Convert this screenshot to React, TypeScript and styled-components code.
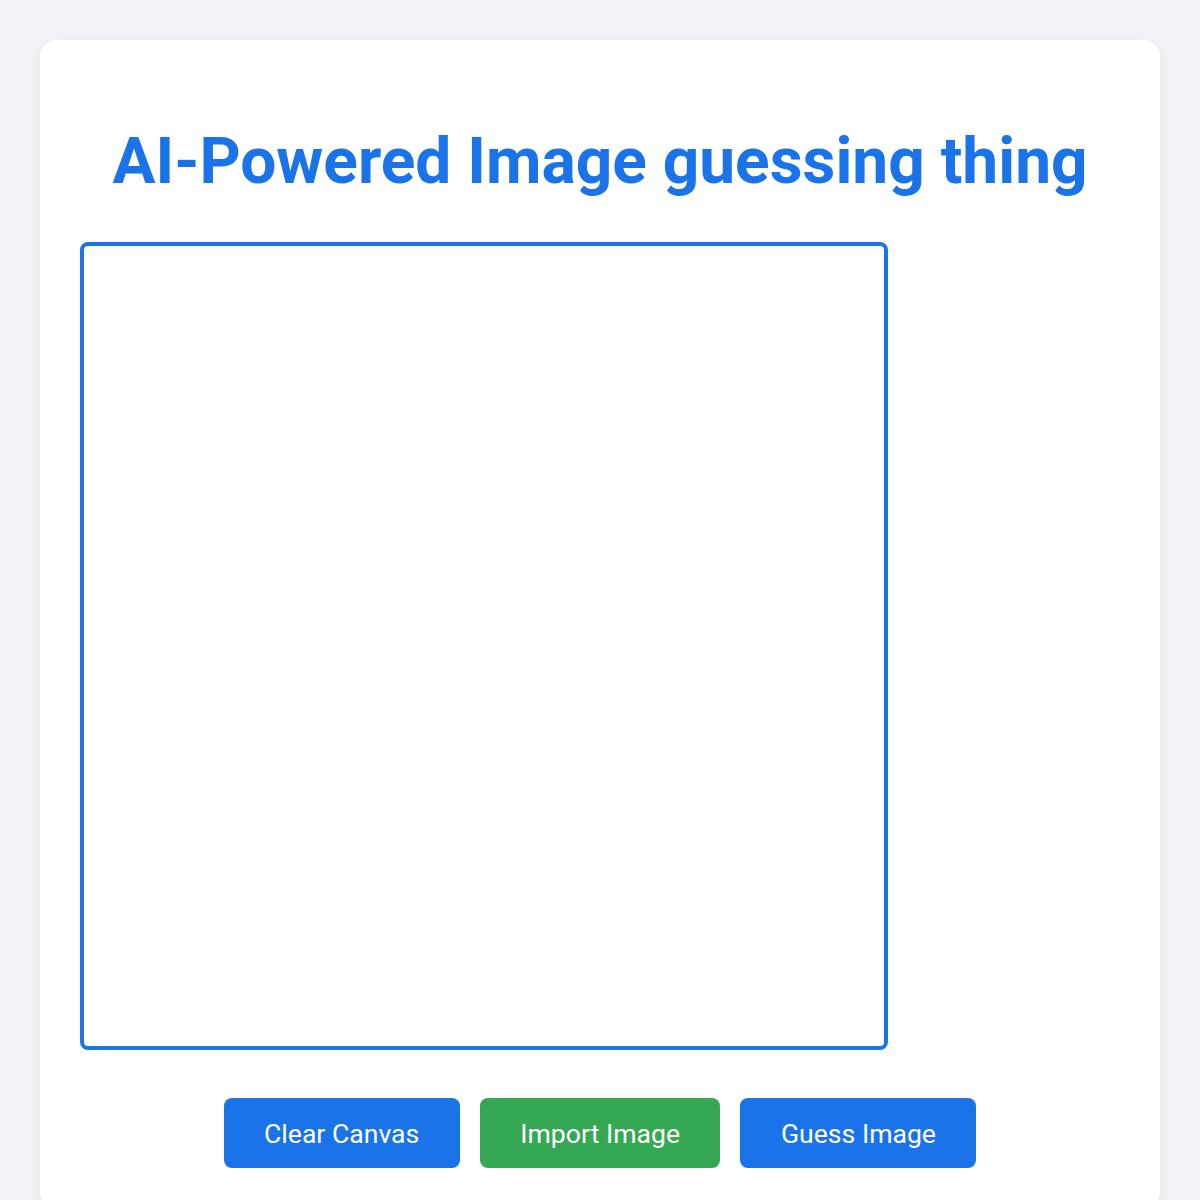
import { createGlobalStyle, styled } from "styled-components";

const GlobalStyle = createGlobalStyle`
  body {
    margin: 0;
    padding: 40px;
    background: #f0f2f5;
    font-family: Roboto, "Liberation Sans", Arial, sans-serif;
  }
`;

const Card = styled.div`
  background: #ffffff;
  border-radius: 16px;
  padding: 40px;
  box-shadow: 0 4px 12px rgba(0, 0, 0, 0.06);
`;

const Title = styled.h1`
  margin: 0;
  padding: 44px 0 43px;
  font-size: 64px;
  font-weight: 700;
  color: #1a73e8;
  text-align: center;
`;

const DrawCanvas = styled.canvas`
  display: block;
  width: 800px;
  height: 800px;
  border: 4px solid #1a73e8;
  border-radius: 8px;
  background: #ffffff;
`;

const ButtonRow = styled.div`
  display: flex;
  justify-content: center;
  gap: 20px;
  margin-top: 48px;
`;

const ActionButton = styled.button<{ $variant?: "primary" | "success" }>`
  border: none;
  border-radius: 8px;
  padding: 0 40.5px;
  height: 70px;
  font-family: Roboto, "Liberation Sans", Arial, sans-serif;
  font-size: 26.6px;
  color: #ffffff;
  background: ${({ $variant }) => ($variant === "success" ? "#34a853" : "#1a73e8")};
  cursor: pointer;
`;

const App = () => {
  return (
    <>
      <GlobalStyle />
      <Card>
        <Title>AI-Powered Image guessing thing</Title>
        <DrawCanvas width={800} height={800} />
        <ButtonRow>
          <ActionButton>Clear Canvas</ActionButton>
          <ActionButton $variant="success">Import Image</ActionButton>
          <ActionButton>Guess Image</ActionButton>
        </ButtonRow>
      </Card>
    </>
  );
};

export default App;
